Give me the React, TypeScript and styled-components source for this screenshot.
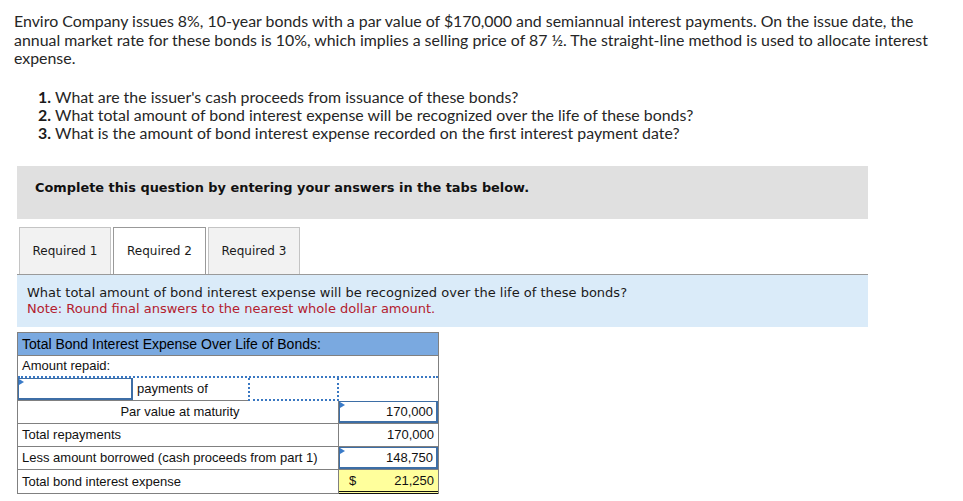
import React from "react";
import styled, { createGlobalStyle } from "styled-components";

const GlobalStyle = createGlobalStyle`
  html, body { margin: 0; padding: 0; background: #fff; }
  body { font-family: "Lato", "Liberation Sans", sans-serif; }
`;

const Page = styled.div`
  padding: 12px 14px 0 14px;
  width: 963px;
  box-sizing: border-box;
`;

const Intro = styled.p`
  margin: 0;
  font-family: "Lato", sans-serif;
  font-size: 15.9px;
  line-height: 18.5px;
  color: #262626;
  width: 935px;
`;

const List = styled.ol`
  list-style: none;
  margin: 20px 0 0 0;
  padding: 0;
  font-family: "Lato", sans-serif;
  font-size: 15.9px;
  line-height: 18px;
  color: #262626;
`;

const Item = styled.li`
  display: grid;
  grid-template-columns: 37px 1fr;
  column-gap: 4px;
`;

const Num = styled.span`
  font-weight: 700;
  text-align: right;
  color: #1a1a1a;
`;

const QuestionBox = styled.div`
  margin: 24px 0 0 3px;
  width: 851px;
  height: 53px;
  box-sizing: border-box;
  background: #e0e0e0;
  padding: 14px 0 0 18px;
  font-family: "DejaVu Sans", Verdana, sans-serif;
  font-weight: 700;
  font-size: 12.9px;
  line-height: 16px;
  color: #111;
`;

const TabRow = styled.div`
  display: flex;
  gap: 2px;
  margin: 8px 0 0 5px;
  align-items: flex-end;
`;

const Tab = styled.div<{ $active?: boolean }>`
  width: ${(p) => (p.$active ? 93 : 92)}px;
  height: 47px;
  box-sizing: border-box;
  display: flex;
  align-items: center;
  justify-content: center;
  background: ${(p) => (p.$active ? "#ffffff" : "#f2f2f2")};
  border: 1px solid ${(p) => (p.$active ? "#999999" : "#c4c4c4")};
  border-bottom: none;
  font-family: "DejaVu Sans", Verdana, sans-serif;
  font-size: 12px;
  color: #1a1a1a;
`;

const Band = styled.div`
  margin-left: 3px;
  width: 851px;
  height: 53px;
  box-sizing: border-box;
  border-top: 1px solid #9a9a9a;
  background: #daebf9;
  padding: 10px 0 0 10px;
  font-family: "DejaVu Sans", Verdana, sans-serif;
  font-size: 13px;
  line-height: 16px;
  color: #1a1a1a;
`;

const Note = styled.div`
  color: #b3202e;
`;

const Sheet = styled.table`
  margin: 5px 0 0 3px;
  border-collapse: separate;
  border-spacing: 0;
  width: 422px;
  table-layout: fixed;
  font-family: "Liberation Sans", Arial, sans-serif;
  font-size: 13px;
  color: #111;
  border-left: 1px solid #808080;
  border-right: 1px solid #808080;
  border-top: 1px solid #808080;
`;

const HeadCell = styled.td`
  background: #7aa9e0;
  height: 22px;
  padding: 0 0 0 4px;
  font-size: 14px;
  line-height: 18px;
  color: #000;
  border-bottom: 1px solid #808080;
  white-space: nowrap;
`;

const LabelCell = styled.td<{ $dottedBottom?: boolean }>`
  height: 20px;
  padding: 0 0 0 4px;
  border-bottom: ${(p) => (p.$dottedBottom ? "2px dotted #3a78c2" : "1px solid #808080")};
  white-space: nowrap;
`;

const SplitLabel = styled.td<{ $center?: boolean }>`
  height: 22px;
  padding: 0 0 0 4px;
  text-align: ${(p) => (p.$center ? "center" : "left")};
  border-bottom: 1px solid #808080;
  border-right: 1px solid #808080;
  white-space: nowrap;
`;

const InputCell = styled.td`
  padding: 0;
  height: 22px;
  border-bottom: 1px solid #808080;
`;

const PlainText = styled.td`
  padding: 0 0 0 4px;
  border-bottom: 1px solid #808080;
  white-space: nowrap;
`;

const DottedBoxCell = styled.td`
  padding: 0;
  border-left: 2px dotted #3a78c2;
  border-right: 2px dotted #3a78c2;
  border-bottom: 2px dotted #3a78c2;
`;

const EmptyCell = styled.td`
  padding: 0;
`;

const Entry = styled.div<{ $align?: "left" | "right" }>`
  position: relative;
  height: 22px;
  box-sizing: border-box;
  border: 1px solid #3d6ea6;
  border-width: 1px 2px 2px 1px;
  padding: 0 3px;
  line-height: 20px;
  text-align: ${(p) => (p.$align === "right" ? "right" : "left")};
  background: #fff;
  &::before {
    content: "";
    position: absolute;
    left: 0;
    top: 0;
    border-top: 3px solid transparent;
    border-bottom: 3px solid transparent;
    border-left: 5px solid #3a7bc8;
  }
`;

const ValueCell = styled.td`
  padding: 0 4px 0 0;
  text-align: right;
  height: 22px;
  border-bottom: 1px solid #808080;
`;

const TotalCell = styled.td`
  padding: 0 4px 0 10px;
  height: 21px;
  background: #ffff9c;
  border-bottom: 3px double #111;
`;

const TotalInner = styled.div`
  display: flex;
  justify-content: space-between;
`;

export default function App() {
  return (
    <>
      <GlobalStyle />
      <Page>
        <Intro>
          Enviro Company issues 8%, 10-year bonds with a par value of $170,000 and semiannual interest
          payments. On the issue date, the annual market rate for these bonds is 10%, which implies a
          selling price of 87 ½. The straight-line method is used to allocate interest expense.
        </Intro>
        <List>
          <Item>
            <Num>1.</Num>
            <span>What are the issuer's cash proceeds from issuance of these bonds?</span>
          </Item>
          <Item>
            <Num>2.</Num>
            <span>What total amount of bond interest expense will be recognized over the life of these bonds?</span>
          </Item>
          <Item>
            <Num>3.</Num>
            <span>What is the amount of bond interest expense recorded on the first interest payment date?</span>
          </Item>
        </List>
        <QuestionBox>Complete this question by entering your answers in the tabs below.</QuestionBox>
        <TabRow>
          <Tab>Required 1</Tab>
          <Tab $active>Required 2</Tab>
          <Tab>Required 3</Tab>
        </TabRow>
        <Band>
          <div>What total amount of bond interest expense will be recognized over the life of these bonds?</div>
          <Note>Note: Round final answers to the nearest whole dollar amount.</Note>
        </Band>
        <Sheet>
          <colgroup>
            <col style={{ width: 115 }} />
            <col style={{ width: 115 }} />
            <col style={{ width: 91 }} />
            <col style={{ width: 99 }} />
          </colgroup>
          <tbody>
            <tr>
              <HeadCell colSpan={4}>Total Bond Interest Expense Over Life of Bonds:</HeadCell>
            </tr>
            <tr>
              <LabelCell colSpan={4} $dottedBottom>Amount repaid:</LabelCell>
            </tr>
            <tr>
              <InputCell>
                <Entry />
              </InputCell>
              <PlainText>payments of</PlainText>
              <DottedBoxCell />
              <EmptyCell />
            </tr>
            <tr>
              <SplitLabel colSpan={3} $center>Par value at maturity</SplitLabel>
              <InputCell>
                <Entry $align="right">170,000</Entry>
              </InputCell>
            </tr>
            <tr>
              <SplitLabel colSpan={3}>Total repayments</SplitLabel>
              <ValueCell>170,000</ValueCell>
            </tr>
            <tr>
              <SplitLabel colSpan={3}>Less amount borrowed (cash proceeds from part 1)</SplitLabel>
              <InputCell>
                <Entry $align="right">148,750</Entry>
              </InputCell>
            </tr>
            <tr>
              <SplitLabel colSpan={3}>Total bond interest expense</SplitLabel>
              <TotalCell>
                <TotalInner>
                  <span>$</span>
                  <span>21,250</span>
                </TotalInner>
              </TotalCell>
            </tr>
          </tbody>
        </Sheet>
      </Page>
    </>
  );
}
